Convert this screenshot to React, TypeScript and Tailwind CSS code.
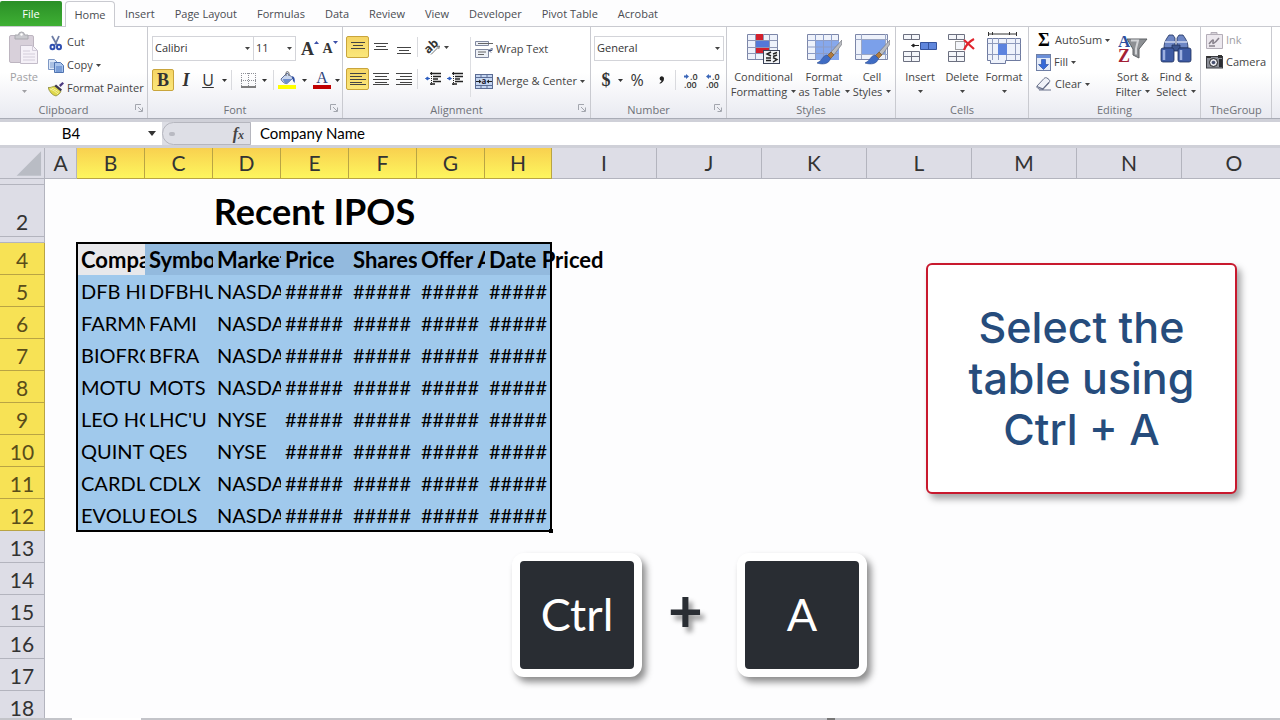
import type { ReactNode } from "react";
import clsx from "clsx";

const TABS = [
  "Insert",
  "Page Layout",
  "Formulas",
  "Data",
  "Review",
  "View",
  "Developer",
  "Pivot Table",
  "Acrobat",
];

const COLUMNS = "ABCDEFGHIJKLMNO".split("");
const HEADINGS = ["Company", "Symbol", "Market", "Price", "Shares", "Offer A", "Date Priced"];
const IPOS = [
  ["DFB HI", "DFBHU", "NASDAQ"],
  ["FARMMI", "FAMI", "NASDAQ"],
  ["BIOFRO", "BFRA", "NASDAQ"],
  ["MOTU", "MOTS", "NASDAQ"],
  ["LEO HO", "LHC'U", "NYSE"],
  ["QUINT", "QES", "NYSE"],
  ["CARDL", "CDLX", "NASDAQ"],
  ["EVOLU", "EOLS", "NASDAQ"],
];
const EMPTY_ROWS = [13, 14, 15, 16, 17, 18];

/* ---------- small parts ---------- */

function Caret({ className }: { className?: string }) {
  return (
    <svg viewBox="0 0 5 3" className={clsx("h-[3px] w-[5px] shrink-0", className)} fill="currentColor">
      <path d="M0 0h5L2.500 3z" />
    </svg>
  );
}

function Launcher() {
  return (
    <svg viewBox="0 0 8 8" className="absolute right-1 bottom-1.5 h-2 w-2" fill="none" stroke="#a3a6ae">
      <path d="M.5 6V.5H6M3 3l4 4M7.500 3.500v4h-4" />
    </svg>
  );
}

function Divider() {
  return <span className="h-5 w-px shrink-0 bg-[#d9dade]" />;
}

function Group({ title, className, launcher, children }: {
  title: string;
  className: string;
  launcher?: boolean;
  children: ReactNode;
}) {
  return (
    <section className={clsx("relative flex shrink-0 flex-col border-r border-[#c9cad0] pt-1", className)}>
      <div className="flex h-[70px] shrink-0">{children}</div>
      <h2 className={clsx("text-center leading-[18px] text-[#6f7278]", launcher && "pr-5")}>{title}</h2>
      {launcher && <Launcher />}
    </section>
  );
}

function BigButton({ icon, lines, className, disabled }: {
  icon: ReactNode;
  lines: string[];
  className: string;
  disabled?: boolean;
}) {
  return (
    <button
      className={clsx("flex shrink-0 flex-col items-center whitespace-nowrap leading-[15px]", className, disabled && "text-[#a0a0a4]")}
    >
      <span className="mb-0.5 flex h-9 items-center">{icon}</span>
      <span>{lines[0]}</span>
      <span className="flex h-[15px] items-center gap-1">
        {lines[1]}
        <Caret />
      </span>
    </button>
  );
}

function SmallButton({ icon, label, caret, className, disabled }: {
  icon: ReactNode;
  label: string;
  caret?: boolean;
  className?: string;
  disabled?: boolean;
}) {
  return (
    <button className={clsx("flex items-center gap-[3px] whitespace-nowrap", className, disabled && "text-[#a0a0a4]")}>
      {icon}
      <span>{label}</span>
      {caret && <Caret />}
    </button>
  );
}

function Tool({ label, active, className, children }: {
  label: string;
  active?: boolean;
  className?: string;
  children: ReactNode;
}) {
  return (
    <button
      aria-label={label}
      className={clsx(
        "flex h-[22px] shrink-0 items-center justify-center",
        active && "rounded-xs border border-[#c9a53c] bg-linear-to-b from-[#f5d565] to-[#fbe77a]",
        className,
      )}
    >
      {children}
    </button>
  );
}

function ComboBox({ label, value, className }: { label: string; value: string; className: string }) {
  return (
    <div className={clsx("relative flex h-[25px] items-center border border-[#d3d4d9] bg-white", className)}>
      <select aria-label={label} className="h-full w-full appearance-none bg-transparent pl-0.5 text-[#333] outline-none">
        <option>{value}</option>
      </select>
      <Caret className="pointer-events-none absolute right-[3px]" />
    </div>
  );
}

/* ---------- icons ---------- */

function PasteIcon() {
  return (
    <svg viewBox="0 0 32 36" className="h-9 w-8">
      <rect x="1.500" y="4.500" width="24" height="27" rx="1.500" fill="#d8d0da" stroke="#bdb5c0" />
      <path d="M7 8V4h3.500a3 3 0 0 1 6 0H20v4z" fill="#c9c9ce" stroke="#a8a8ae" />
      <circle cx="13.500" cy="3.500" r="1.200" fill="#fff" />
      <path d="M12.500 14.500h12l5 5v13h-17z" fill="#f5f1f8" stroke="#c3bcc9" />
      <path d="M24.500 14.500v5h5M15 20h7M15 23h12M15 26h12M15 29h12" fill="none" stroke="#d3cdda" />
    </svg>
  );
}

function CutIcon() {
  return (
    <svg viewBox="0 0 16 16" className="h-4 w-4" fill="none">
      <path d="M4 1l5 9M11 1L7 10" stroke="#6e7da6" strokeWidth="1.800" />
      <ellipse cx="4.500" cy="12" rx="2" ry="2.300" stroke="#2f4fb0" strokeWidth="2" />
      <ellipse cx="11" cy="12" rx="2" ry="2.300" stroke="#2f4fb0" strokeWidth="2" />
    </svg>
  );
}

function CopyIcon() {
  return (
    <svg viewBox="0 0 16 16" className="h-4 w-4">
      <path d="M.5 1.500h6l3 3v7h-9z" fill="#dce7f7" stroke="#7d97c4" />
      <path d="M2 5h5M2 7h5M2 9h5" stroke="#7b9bd0" />
      <path d="M6.500 4.500h6l3 3v7h-9z" fill="#a9c4ec" stroke="#4f73b0" />
      <path d="M8 9h6M8 11h6M8 13h6" stroke="#4d78c2" />
    </svg>
  );
}

function PainterIcon() {
  return (
    <svg viewBox="0 0 16 16" className="h-4 w-4">
      <path d="M11 4l3.500-3L16 2.500 12.500 6z" fill="#4c3a80" />
      <path d="M0 6.500c3 .5 5-1.500 8-1.500l5 4.500c0 2-2 4-5 5.500C4 14 1.500 11 0 6.500z" fill="#dfd84a" stroke="#7f8136" strokeWidth=".7" />
      <path d="M2 8c3 1 6 3 8 5M3.500 7c3 1 6 3 7.500 4.500" fill="none" stroke="#f7f3a8" />
      <path d="M8 3.500l6 5-1.500 1.800-6-5z" fill="#3d3750" />
    </svg>
  );
}

function BorderIcon() {
  return (
    <svg viewBox="0 0 15 15" className="h-[15px] w-[15px]" fill="none" stroke="#8d8f96">
      <path d="M.5 0v13M7.500 0v13M14.500 0v13M0 .5h15M0 7.500h15" strokeDasharray="1 1" />
      <path d="M0 14h15" stroke="#555" strokeWidth="1.500" />
    </svg>
  );
}

function FillColorIcon() {
  return (
    <svg viewBox="0 0 18 18" className="h-[18px] w-[18px]">
      <path d="M3 8l6-6 6 5-6 5.500c-2 .5-5-1.500-6-4.500z" fill="#c9d6ee" stroke="#5d6f9c" />
      <path d="M5 8h9l-5 4.500c-2 0-4-2-4-4.500z" fill="#6e8fce" />
      <path d="M8 5V1.500c1-1.500 3-1 3 1V5" fill="none" stroke="#666" />
      <path d="M14 5c3 1 3 4 2.500 7-1-1-2-3-2.500-7z" fill="#2e4ea3" />
      <path d="M0 14h18v4H0z" fill="#ff0" />
    </svg>
  );
}

function Lines({ rows }: { rows: [number, number, number][] }) {
  return (
    <svg viewBox="0 0 16 14" className="h-3.5 w-4" stroke="#444">
      {rows.map(([y, from, to]) => (
        <path key={y} d={`M${from} ${y}.5H${to}`} />
      ))}
    </svg>
  );
}

function OrientationIcon() {
  return (
    <svg viewBox="0 0 18 16" className="h-4 w-[18px]">
      <text x="1" y="11" fontSize="12" fontWeight="700" fill="#333" transform="rotate(-42 8 9)">ab</text>
      <path d="M7 15.500L15.500 7M15.500 7l-3 .8M15.500 7l-.8 3" stroke="#777" fill="none" />
    </svg>
  );
}

function IndentIcon({ inward }: { inward?: boolean }) {
  return (
    <svg viewBox="0 0 16 14" className="h-3.5 w-4" fill="none" stroke="#222">
      <path d="M5 1.500h11M8 4.500h8M8 7h5M8 9.500h8M5 12h5" strokeWidth="1.600" />
      <path d="M6.500 0v14" strokeDasharray="1 1" />
      {inward ? (
        <path d="M0 6.500h3M2 5l2.500 1.500L2 8z" stroke="#2f5fc0" fill="#2f5fc0" />
      ) : (
        <path d="M5 6.500H2M3 5L.5 6.500 3 8z" stroke="#2f5fc0" fill="#2f5fc0" />
      )}
    </svg>
  );
}

function WrapIcon() {
  return (
    <svg viewBox="0 0 18 17" className="h-[17px] w-[18px]" fill="none">
      <path d="M.5.5h13v4H.5zM.5 8.500h13v8H.5z" fill="#edf0f6" stroke="#8189a0" />
      <path d="M3 2.500h15M3 11h8M3 13.500h6" stroke="#666" />
      <path d="M17 7v2.500h-3M16 7.500l-2 2 2 2" stroke="#3a4a70" />
    </svg>
  );
}

function MergeIcon() {
  return (
    <svg viewBox="0 0 18 15" className="h-[15px] w-[18px]">
      <rect x=".5" y=".5" width="17" height="14" fill="#c5d6f2" stroke="#5b6c94" />
      <path d="M0 3.500h18M0 11.500h18M6 0v3M12 0v3M6 12v3M12 12v3" stroke="#5b6c94" />
      <path d="M1 7.500h5M17 7.500h-5" stroke="#222" />
      <path d="M4 5.500l2.500 2L4 9.500zM14 5.500l-2.500 2 2.500 2z" fill="#222" />
      <text x="6.500" y="10" fontSize="8" fontWeight="700" fill="#223">a</text>
    </svg>
  );
}

function DecimalIcon({ less }: { less?: boolean }) {
  return (
    <svg viewBox="0 0 16 15" className="h-[15px] w-4 font-semibold" fill="#333">
      <path d={less ? "M1 3.500L4 1v1.500h2v2H4V6z" : "M6 3.500L3 1v1.500H1v2h2V6z"} fill="#3a66b8" />
      <text x="7" y="7" fontSize="9">.0</text>
      <text x="1" y="15" fontSize="9">.00</text>
    </svg>
  );
}

function ConditionalIcon() {
  return (
    <svg viewBox="0 0 34 32" className="h-8 w-[34px]">
      <path d="M.5 1.500h30v25H.5z" fill="#eef2fb" stroke="#7c86a8" />
      <path d="M9 1h7v7H9zM9 14h13v7H9z" fill="#d3202c" />
      <path d="M9 8h13v6H9z" fill="#5478d8" />
      <path d="M.5 7.500h30M.5 14.500h30M.5 20.500h30M8.500 1v25M16.500 1v7M22.500 1v25" stroke="#8d96b5" fill="none" />
      <rect x="16.500" y="17.500" width="16" height="13" fill="#f2f4f7" stroke="#3c4358" />
      <path d="M24 19l-4 2 4 2M26 21l4-1.500M26 23.500l4-1.500M19 25h5M19 27.500h5M26 24.500l4 2-4 2.500" stroke="#222" strokeWidth="1.400" fill="none" />
    </svg>
  );
}

function Brush() {
  return (
    <>
      <path d="M36 7L25 19l3 3 8-11z" fill="#b9bcc2" stroke="#77797f" strokeWidth=".7" />
      <path d="M25 19l-4 4 3 3 4-4z" fill="#b07a3c" stroke="#74501f" strokeWidth=".6" />
      <path d="M21 22c-5 1-4 5-10 8 6 2 12 1 13.500-4.500z" fill="#3f6cc4" stroke="#2f4f92" strokeWidth=".6" />
    </>
  );
}

function FormatTableIcon() {
  return (
    <svg viewBox="0 0 36 32" className="h-8 w-9">
      <path d="M1.500 1.500h31v25h-31z" fill="#eef2fb" stroke="#7c86a8" />
      <path d="M10 8h23v19H10z" fill="#86a8ec" />
      <path d="M1.500 7.500h31M1.500 14h31M1.500 20.500h31M9.500 1v25M17.500 1v25M25.500 1v25" stroke="#8c9cc6" fill="none" />
      <Brush />
    </svg>
  );
}

function CellStylesIcon() {
  return (
    <svg viewBox="0 0 36 32" className="h-8 w-9">
      <path d="M1.500 1.500h32v25h-32z" fill="#eef2fb" stroke="#7c86a8" />
      <path d="M1.500 6.500h32M1.500 21.500h32M7.500 1v25M31.500 1v25" stroke="#9aa6c4" fill="none" />
      <path d="M8 7h23v14H8z" fill="#7ba0ea" />
      <Brush />
    </svg>
  );
}

function InsertIcon() {
  return (
    <svg viewBox="0 0 34 32" className="h-8 w-[34px]" fill="#f4f6fa" stroke="#6c7080">
      <path d="M.5 1.500h16v5H.5zM8.500 1v6M.5 18.500h16v10H.5zM8.500 18v10M.5 23.500h16" />
      <path d="M17.500 9.500h16v7h-16z" fill="#5f86dc" stroke="#35539c" />
      <path d="M25.500 9v8" stroke="#35539c" />
      <path d="M16 12.500H9M11 11l-2.500 1.500L11 14z" fill="#222" stroke="#222" />
    </svg>
  );
}

function DeleteIcon() {
  return (
    <svg viewBox="0 0 28 32" className="h-8 w-7" fill="#f4f6fa" stroke="#6c7080">
      <path d="M.5 1.500h16v5H.5zM8.500 1v6M.5 18.500h16v10H.5zM8.500 18v10M.5 23.500h16" />
      <path d="M7.500 8.500h9v8h-9z" strokeDasharray="1 1" stroke="#444" />
      <path d="M16 7l10 9M26 6c-4 2-8 6-10 11" fill="none" stroke="#e0242c" strokeWidth="2.200" />
    </svg>
  );
}

function FormatCellsIcon() {
  return (
    <svg viewBox="0 0 34 34" className="h-[34px] w-[34px]">
      <path d="M1 2h29M1.500 0v4M5.500 0v3M22.500 0v3M29.500 0v4" stroke="#333" fill="none" />
      <path d="M.5 6.500h33v22h-15v3h-15v-3h-3z" fill="#eef2fb" stroke="#6f7ba0" />
      <path d="M.5 11.500h33M.5 22.500h33M5.500 6v22M11.500 6v22M19.500 6v22M28.500 6v22" stroke="#8f9bbd" fill="none" />
      <path d="M11 12h9v11h-9z" fill="#5c83de" />
    </svg>
  );
}

function FillDownIcon() {
  return (
    <svg viewBox="0 0 15 17" className="h-[17px] w-[15px]">
      <rect x=".5" y=".5" width="14" height="16" fill="#e4ebf8" stroke="#6f7fa5" />
      <path d="M1 1h13v3H1z" fill="#6b8fd8" />
      <path d="M5.500 5.500h4v5h3l-5 5-5-5h3z" fill="#3468d8" stroke="#234799" strokeWidth=".6" />
    </svg>
  );
}

function EraserIcon() {
  return (
    <svg viewBox="0 0 16 14" className="h-3.5 w-4">
      <path d="M1 9l7-7.500c1-1 2-1 3-.5l2 1.500c1 1 1 2 0 3L7 12H3c-2-1-2.500-2-2-3z" fill="#f0f2f8" stroke="#69718a" />
      <path d="M1 9.500L7 12l6-6.500M3 13h12" fill="none" stroke="#69718a" strokeWidth="1.200" />
    </svg>
  );
}

function SortIcon() {
  return (
    <svg viewBox="0 0 30 30" className="h-[30px] w-[30px] font-['Liberation_Serif'] font-bold">
      <path d="M9 5h20l-8 10v9l-6-3v-6z" fill="#8d9094" stroke="#5e6165" />
      <path d="M13 6.500h7l-2 8v6" fill="none" stroke="#d2d4d7" strokeWidth="2" />
      <text x="0" y="13" fontSize="17" fill="#2d4f9e">A</text>
      <text x="0" y="28" fontSize="18" fill="#a32035">Z</text>
    </svg>
  );
}

function BinocularsIcon() {
  return (
    <svg viewBox="0 0 32 30" className="h-[30px] w-8" stroke="#1f315e" strokeWidth=".8">
      <path d="M7 4l2-3h4l2 3v10H4c0-4 1-7 3-10zM25 4l-2-3h-4l-2 3v10h11c0-4-1-7-3-10z" fill="#6d86c4" />
      <path d="M5 8h10M17 8h10" stroke="#b4c1e4" strokeWidth="2" />
      <path d="M12 11h8v6h-8z" fill="#3c558f" />
      <rect x="1" y="14" width="13" height="14" rx="2" fill="#3e5ba4" />
      <rect x="18" y="14" width="13" height="14" rx="2" fill="#3e5ba4" />
      <path d="M4 16v10M21 16v10" stroke="#9db0e0" strokeWidth="2.500" />
    </svg>
  );
}

function InkIcon() {
  return (
    <svg viewBox="0 0 17 17" className="h-[17px] w-[17px]" fill="none" stroke="#b4aeb8">
      <path d="M.5 2.500h16v14H.5z" fill="#ece8ee" />
      <path d="M5 2.500V.5h6v2z" fill="#d8d4da" />
      <path d="M3 12c4-5 5-5 4-2s2 1 6-4M3 14h6" stroke="#88828c" strokeWidth="1.500" />
    </svg>
  );
}

function CameraIcon() {
  return (
    <svg viewBox="0 0 17 14" className="h-3.5 w-[17px]">
      <rect x=".5" y="1.500" width="16" height="11.500" fill="#8c8f98" stroke="#3a3c42" />
      <path d="M1 1h4v2H1zM12 0h4v3h-4z" fill="#333" />
      <path d="M13 4h3v8h-3z" fill="#2c2e34" />
      <circle cx="7.500" cy="7.500" r="4" fill="#e7e8ee" stroke="#222" />
      <circle cx="7.500" cy="7.500" r="1.800" fill="#47506f" />
    </svg>
  );
}

/* ---------- ribbon ---------- */

function TabBar() {
  return (
    <nav className="flex h-[27px] shrink-0 items-stretch border-b border-[#c9cad0] pt-px leading-[25px] text-[#4a4c52]">
      <button className="mr-[3px] w-[62px] rounded-t-xs bg-linear-to-b from-[#2a8f27] to-[#3fb034] text-white">File</button>
      <button className="-mb-px w-[50px] rounded-t-sm border border-b-0 border-[#c9cad0] bg-white">Home</button>
      <div className="flex gap-5 pl-2.5">
        {TABS.map((tab) => (
          <button key={tab}>{tab}</button>
        ))}
      </div>
    </nav>
  );
}

function FontGroup() {
  return (
    <Group title="Font" className="w-[195px]" launcher>
      <div className="flex flex-col pl-1">
        <div className="mt-[5px] flex h-[25px] items-center">
          <ComboBox label="Font" value="Calibri" className="w-[102px]" />
          <ComboBox label="Font size" value="11" className="-ml-px w-[43px]" />
          <Tool label="Grow font" className="ml-1 w-5 font-['Liberation_Serif'] text-lg font-bold text-[#333]">
            A<Caret className="mb-3 rotate-180 text-[#3b4fa8]" />
          </Tool>
          <Tool label="Shrink font" className="w-5 font-['Liberation_Serif'] text-sm font-bold text-[#333]">
            A<Caret className="mb-3 text-[#3b4fa8]" />
          </Tool>
        </div>
        <div className="mt-2 flex items-center text-[#333]">
          <Tool label="Bold" active className="w-[22px] font-['Liberation_Serif'] text-lg font-bold">B</Tool>
          <Tool label="Italic" className="w-6 font-['Liberation_Serif'] text-lg font-bold italic">I</Tool>
          <Tool label="Underline" className="w-5 text-base underline">U</Tool>
          <Caret className="mx-1" />
          <Divider />
          <Tool label="Borders" className="ml-2 w-4"><BorderIcon /></Tool>
          <Caret className="mx-1.5" />
          <Divider />
          <Tool label="Fill colour" className="ml-1 w-[18px]"><FillColorIcon /></Tool>
          <Caret className="mx-1.5" />
          <Tool label="Font colour" className="w-[18px]">
            <span className="flex h-[18px] w-[18px] items-center justify-center border-b-4 border-[#c00000] font-['Liberation_Serif'] text-base text-[#2d3f78]">A</span>
          </Tool>
          <Caret className="ml-1" />
        </div>
      </div>
    </Group>
  );
}

function AlignmentGroup() {
  return (
    <Group title="Alignment" className="w-[248px]" launcher>
      <div className="flex flex-col pt-[5px] pl-[3px]">
        <div className="flex h-[22px] items-center">
          <Tool label="Top align" active className="w-[23px]">
            <Lines rows={[[2, 1, 15], [5, 3, 13], [8, 1, 15]]} />
          </Tool>
          <Tool label="Middle align" className="w-[23px]">
            <Lines rows={[[3, 1, 15], [6, 3, 13], [9, 1, 15]]} />
          </Tool>
          <Tool label="Bottom align" className="w-[23px]">
            <Lines rows={[[7, 1, 15], [10, 3, 13], [13, 1, 15]]} />
          </Tool>
          <span className="w-0.5" />
          <Divider />
          <Tool label="Orientation" className="ml-1.5 w-[18px]"><OrientationIcon /></Tool>
          <Caret className="ml-0.5" />
        </div>
        <div className="mt-2.5 flex h-[22px] items-center">
          <Tool label="Align left" active className="w-[23px]">
            <Lines rows={[[1, 0, 16], [4, 0, 12], [7, 0, 16], [10, 0, 12], [12, 0, 16]]} />
          </Tool>
          <Tool label="Centre" className="w-[23px]">
            <Lines rows={[[1, 0, 16], [4, 2, 14], [7, 0, 16], [10, 2, 14], [12, 0, 16]]} />
          </Tool>
          <Tool label="Align right" className="w-[23px]">
            <Lines rows={[[1, 0, 16], [4, 4, 16], [7, 0, 16], [10, 4, 16], [12, 0, 16]]} />
          </Tool>
          <span className="w-0.5" />
          <Divider />
          <Tool label="Decrease indent" className="ml-1 w-[22px]"><IndentIcon /></Tool>
          <Tool label="Increase indent" className="w-[22px]"><IndentIcon inward /></Tool>
        </div>
      </div>
      <div className="mt-1.5 ml-1 h-[60px] w-px bg-[#dddee2]" />
      <div className="flex flex-col gap-2.5 pt-[7px] pl-1">
        <SmallButton icon={<WrapIcon />} label="Wrap Text" className="h-[22px]" />
        <SmallButton icon={<MergeIcon />} label="Merge & Center" caret className="h-[22px]" />
      </div>
    </Group>
  );
}

function NumberGroup() {
  return (
    <Group title="Number" className="w-[136px]" launcher>
      <div className="flex flex-col pl-[3px]">
        <div className="mt-[5px]">
          <ComboBox label="Number format" value="General" className="w-[130px]" />
        </div>
        <div className="mt-2 flex items-center text-[#333]">
          <Tool label="Currency" className="w-6 font-['Liberation_Serif'] text-lg font-bold">$</Tool>
          <Caret />
          <Tool label="Percent" className="w-7 text-base">%</Tool>
          <Tool label="Comma" className="w-5">
            <svg viewBox="0 0 6 9" className="h-2 w-[5px]"><path d="M3 0a3 3 0 0 1 3 3c0 3-2 5-5 6l-.3-1C2.500 7 3 6 3 5.500A2.800 2.800 0 0 1 3 0z" fill="#222" /></svg>
          </Tool>
          <span className="w-1" />
          <Divider />
          <Tool label="Increase decimal" className="ml-1.5 w-[18px]"><DecimalIcon /></Tool>
          <Tool label="Decrease decimal" className="ml-1 w-[18px]"><DecimalIcon less /></Tool>
        </div>
      </div>
    </Group>
  );
}

function Ribbon() {
  return (
    <div className="flex h-[92px] shrink-0 overflow-hidden border-b border-[#a9acb6] bg-linear-to-b from-white from-50% to-[#e9eaf1]">
      <Group title="Clipboard" className="w-[148px]" launcher>
        <BigButton icon={<PasteIcon />} lines={["Paste"]} className="w-12" disabled />
        <div className="flex flex-col">
          <SmallButton icon={<CutIcon />} label="Cut" className="h-[23px]" />
          <SmallButton icon={<CopyIcon />} label="Copy" caret className="h-[23px]" />
          <SmallButton icon={<PainterIcon />} label="Format Painter" className="h-[23px]" />
        </div>
      </Group>
      <FontGroup />
      <AlignmentGroup />
      <NumberGroup />
      <Group title="Styles" className="w-[169px]">
        <BigButton icon={<ConditionalIcon />} lines={["Conditional", "Formatting"]} className="w-[73px]" />
        <BigButton icon={<FormatTableIcon />} lines={["Format", "as Table"]} className="w-12" />
        <BigButton icon={<CellStylesIcon />} lines={["Cell", "Styles"]} className="w-12" />
      </Group>
      <Group title="Cells" className="w-[133px]">
        <BigButton icon={<InsertIcon />} lines={["Insert"]} className="ml-1 w-10" />
        <BigButton icon={<DeleteIcon />} lines={["Delete"]} className="w-11" />
        <BigButton icon={<FormatCellsIcon />} lines={["Format"]} className="w-10" />
      </Group>
      <Group title="Editing" className="w-[172px]">
        <div className="-mt-0.5 flex w-[82px] flex-col pl-[7px]">
          <SmallButton
            icon={<span className="w-4 text-center font-['Liberation_Serif'] text-lg leading-4 font-bold text-black">Σ</span>}
            label="AutoSum"
            caret
            className="h-[22px]"
          />
          <SmallButton icon={<FillDownIcon />} label="Fill" caret className="h-[22px]" />
          <SmallButton icon={<EraserIcon />} label="Clear" caret className="h-[22px]" />
        </div>
        <BigButton icon={<SortIcon />} lines={["Sort &", "Filter"]} className="w-11" />
        <BigButton icon={<BinocularsIcon />} lines={["Find &", "Select"]} className="w-[42px]" />
      </Group>
      <Group title="TheGroup" className="w-[71px]">
        <div className="-mt-0.5 flex flex-col pl-[5px]">
          <SmallButton icon={<InkIcon />} label="Ink" className="h-[22px]" disabled />
          <SmallButton icon={<CameraIcon />} label="Camera" className="h-[22px]" />
        </div>
      </Group>
    </div>
  );
}

function FormulaBar() {
  return (
    <div className="flex h-[29px] shrink-0 items-stretch border-y-[3px] border-[#cfd0d8] bg-[#dcdde4] font-[Lato] text-[15px] text-black">
      <div className="flex w-[162px] items-center bg-white">
        <input aria-label="Name box" defaultValue="B4" className="w-[142px] text-center outline-none" />
        <svg viewBox="0 0 8 5" className="ml-1.5 h-[5px] w-2"><path d="M0 0h8L4 5z" fill="#333" /></svg>
      </div>
      <div className="flex w-[89px] items-center justify-between rounded-l-full border border-[#b5b6be] bg-[#dedfe6] pr-1.5 pl-1.5">
        <span className="h-1 w-1.5 rounded-full bg-[#b9bac2]" />
        <span className="font-['Liberation_Serif'] text-base font-bold text-[#444] italic">f<span className="text-xs">x</span></span>
      </div>
      <input aria-label="Formula" defaultValue="Company Name" className="min-w-0 flex-1 bg-white pl-[9px] outline-none" />
    </div>
  );
}

/* ---------- sheet ---------- */

function RowHead({ n, selected }: { n?: number; selected?: boolean }) {
  return (
    <th
      scope="row"
      className={clsx(
        "border-r border-b p-0 text-center align-bottom text-[21px] font-normal",
        selected ? "border-[#b9a444] bg-[#f7e255] text-[#5a4d1a]" : "border-[#b3b4be] bg-[#dddde6] text-[#333]",
      )}
    >
      {n && <span className="block leading-[28px]">{n}</span>}
    </th>
  );
}

function Sheet() {
  return (
    <table className="w-[1286px] min-w-full table-fixed border-separate border-spacing-0 font-[Lato] text-[21px] whitespace-nowrap text-black">
      <colgroup>
        <col className="w-[45px]" />
        <col className="w-8" />
        {HEADINGS.map((h) => <col key={h} className={h === "Date Priced" ? "w-[67px]" : "w-[68px]"} />)}
        {COLUMNS.slice(8).map((c) => <col key={c} className="w-[105px]" />)}
      </colgroup>
      <thead>
        <tr className="h-[31px]">
          <td className="border-r border-b border-[#b3b4be] bg-[#dddde6] p-0">
            <svg viewBox="0 0 45 30" className="h-[30px] w-11"><path d="M42 3v25H17z" fill="#b9bcc4" /></svg>
          </td>
          {COLUMNS.map((c, i) => (
            <th
              key={c}
              scope="col"
              className={clsx(
                "border-r border-b p-0 leading-[30px] font-normal text-[#333]",
                i > 0 && i < 8
                  ? "border-[#b9a444] bg-linear-to-b from-[#f8d04f] to-[#fdf65e]"
                  : "border-[#b3b4be] bg-[#dddde6]",
              )}
            >
              {c}
            </th>
          ))}
        </tr>
      </thead>
      <tbody>
        <tr className="h-1.5"><RowHead /><td colSpan={15} className="p-0" /></tr>
        <tr className="h-[52px]">
          <RowHead n={2} />
          <td />
          <td colSpan={7} className="p-0 text-center text-4xl font-bold">Recent IPOS</td>
          <td colSpan={7} />
        </tr>
        <tr className="h-1.5"><RowHead /><td colSpan={15} className="p-0" /></tr>
        <tr className="h-8">
          <RowHead n={4} selected />
          <td />
          {HEADINGS.map((h, i) => (
            <td
              key={h}
              className={clsx(
                "p-0 pt-0.5 pl-1 text-[22px] leading-[30px] font-bold",
                i === 0 ? "bg-[#e8e8eb]" : "bg-[#93bade]",
                i < 6 ? "overflow-hidden" : "overflow-visible",
              )}
            >
              {h}
            </td>
          ))}
          <td colSpan={7} />
        </tr>
        {IPOS.map((row, i) => (
          <tr key={row[1]} className="h-8">
            <RowHead n={i + 5} selected />
            <td />
            {[...row, "#####", "#####", "#####", "#####"].map((cell, j) => (
              <td key={j} className="overflow-hidden bg-[#a0c9ec] p-0 pl-1 text-xl leading-[30px]">{cell}</td>
            ))}
            <td colSpan={7} />
          </tr>
        ))}
        {EMPTY_ROWS.map((n) => (
          <tr key={n} className="h-8"><RowHead n={n} /><td colSpan={15} /></tr>
        ))}
      </tbody>
    </table>
  );
}

function Key({ children }: { children: ReactNode }) {
  return (
    <kbd className="flex h-[124px] w-[130px] items-center justify-center rounded-xl border-8 border-white bg-[#292d33] font-[Lato] text-[45px] text-white shadow-[4px_5px_7px_rgba(0,0,0,0.45)]">
      {children}
    </kbd>
  );
}

export default function App() {
  return (
    <div className="flex h-screen flex-col overflow-hidden bg-[#fdfdfe] font-['Open_Sans',sans-serif] text-[11px] text-[#444]">
      <TabBar />
      <Ribbon />
      <FormulaBar />
      <main className="relative min-h-0 flex-1 overflow-hidden">
        <Sheet />

        {/* selection outline with its fill handle */}
        <div className="pointer-events-none absolute top-[94px] left-[76px] h-[290px] w-[476px] border-2 border-black">
          <span className="absolute -right-[3px] -bottom-[3px] h-1 w-1 bg-black" />
        </div>

        <aside className="absolute top-[115px] right-[43px] flex h-[231px] w-[311px] items-center justify-center rounded-md border-2 border-[#c8192e] bg-white text-center font-[Inter] text-[43px] leading-[51px] font-medium text-[#264c7c] shadow-[4px_5px_7px_rgba(0,0,0,0.35)]">
          Select the
          <br />
          table using
          <br />
          Ctrl + A
        </aside>

        <div className="absolute top-[405px] left-[512px] flex items-center">
          <Key>Ctrl</Key>
          <span className="w-[95px] pr-2 pb-3 text-center font-[Lato] text-6xl font-bold text-[#292d33] [text-shadow:4px_5px_5px_rgba(0,0,0,0.4)]">+</span>
          <Key>A</Key>
        </div>
      </main>
      <footer className="flex h-0.5 shrink-0 bg-[#c3c4c9]">
        <span className="ml-[72px] w-[69px] bg-white" />
        <span className="ml-[686px] w-2 bg-[#777]" />
      </footer>
    </div>
  );
}
